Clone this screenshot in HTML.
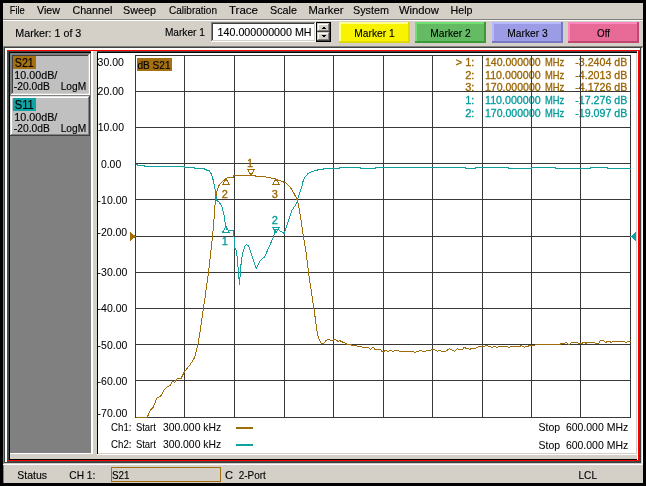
<!DOCTYPE html>
<html><head><meta charset="utf-8"><style>
html,body{margin:0;padding:0;background:#000;width:646px;height:486px;overflow:hidden}
svg{display:block;will-change:transform}
text{font-family:'Liberation Sans',sans-serif}
</style></head><body>
<svg width="646" height="486" viewBox="0 0 646 486" shape-rendering="crispEdges">
<rect x="0" y="0" width="646" height="486" fill="#000"/><rect x="3" y="3" width="640" height="480" fill="#d4d0c8"/><rect x="3" y="19" width="640" height="1" fill="#808080"/><rect x="3" y="20" width="640" height="1" fill="#ffffff"/><text x="9.7" y="14" font-size="11.5" fill="#000" stroke="#000" stroke-width="0.15" text-anchor="start" textLength="15" lengthAdjust="spacingAndGlyphs">File</text><text x="37" y="14" font-size="11.5" fill="#000" stroke="#000" stroke-width="0.15" text-anchor="start" textLength="23" lengthAdjust="spacingAndGlyphs">View</text><text x="72.4" y="14" font-size="11.5" fill="#000" stroke="#000" stroke-width="0.15" text-anchor="start" textLength="40" lengthAdjust="spacingAndGlyphs">Channel</text><text x="123" y="14" font-size="11.5" fill="#000" stroke="#000" stroke-width="0.15" text-anchor="start" textLength="33" lengthAdjust="spacingAndGlyphs">Sweep</text><text x="169" y="14" font-size="11.5" fill="#000" stroke="#000" stroke-width="0.15" text-anchor="start" textLength="48" lengthAdjust="spacingAndGlyphs">Calibration</text><text x="229" y="14" font-size="11.5" fill="#000" stroke="#000" stroke-width="0.15" text-anchor="start" textLength="29" lengthAdjust="spacingAndGlyphs">Trace</text><text x="270" y="14" font-size="11.5" fill="#000" stroke="#000" stroke-width="0.15" text-anchor="start" textLength="27" lengthAdjust="spacingAndGlyphs">Scale</text><text x="308.5" y="14" font-size="11.5" fill="#000" stroke="#000" stroke-width="0.15" text-anchor="start" textLength="35" lengthAdjust="spacingAndGlyphs">Marker</text><text x="353" y="14" font-size="11.5" fill="#000" stroke="#000" stroke-width="0.15" text-anchor="start" textLength="36" lengthAdjust="spacingAndGlyphs">System</text><text x="399" y="14" font-size="11.5" fill="#000" stroke="#000" stroke-width="0.15" text-anchor="start" textLength="40" lengthAdjust="spacingAndGlyphs">Window</text><text x="450.5" y="14" font-size="11.5" fill="#000" stroke="#000" stroke-width="0.15" text-anchor="start" textLength="22" lengthAdjust="spacingAndGlyphs">Help</text><text x="15.3" y="36.6" font-size="11.5" fill="#000" stroke="#000" stroke-width="0.15" text-anchor="start" textLength="66" lengthAdjust="spacingAndGlyphs">Marker: 1 of 3</text><text x="164.9" y="36" font-size="11.5" fill="#000" stroke="#000" stroke-width="0.15" text-anchor="start" textLength="40" lengthAdjust="spacingAndGlyphs">Marker 1</text><rect x="211" y="22" width="105" height="20" fill="#ffffff"/><rect x="211" y="22" width="104" height="19" fill="#808080"/><rect x="212" y="23" width="103" height="18" fill="#d4d0c8"/><rect x="212" y="23" width="102" height="17" fill="#404040"/><rect x="213" y="24" width="101" height="16" fill="#ffffff"/><svg x="213" y="24" width="101" height="16" overflow="hidden"><text x="4.6" y="11.8" font-size="11.5" fill="#000" stroke="#000" stroke-width="0.15" text-anchor="start" textLength="94" lengthAdjust="spacingAndGlyphs">140.000000000 MH</text></svg><rect x="316" y="22" width="15" height="20" fill="#000"/><rect x="317" y="23" width="13" height="9" fill="#404040"/><rect x="317" y="23" width="12" height="8" fill="#d4d0c8"/><rect x="318" y="24" width="11" height="7" fill="#808080"/><rect x="318" y="24" width="10" height="6" fill="#ffffff"/><rect x="319" y="25" width="9" height="5" fill="#d4d0c8"/><rect x="317" y="32" width="13" height="9" fill="#404040"/><rect x="317" y="32" width="12" height="8" fill="#d4d0c8"/><rect x="318" y="33" width="11" height="7" fill="#808080"/><rect x="318" y="33" width="10" height="6" fill="#ffffff"/><rect x="319" y="34" width="9" height="5" fill="#d4d0c8"/><polygon points="321,29 326,29 323.5,26.5" fill="#000"/><polygon points="321,35 326,35 323.5,37.5" fill="#000"/><rect x="339" y="22" width="71" height="21" fill="#e0d800"/><rect x="339" y="22" width="69" height="19" fill="#ffff90"/><rect x="341" y="24" width="67" height="17" fill="#f8f400"/><text x="374.5" y="36.5" font-size="11.5" fill="#000" stroke="#000" stroke-width="0.15" text-anchor="middle" textLength="40.4" lengthAdjust="spacingAndGlyphs">Marker 1</text><rect x="415" y="22" width="71" height="21" fill="#3a9a3a"/><rect x="415" y="22" width="69" height="19" fill="#70e070"/><rect x="417" y="24" width="67" height="17" fill="#64bb64"/><text x="450.5" y="36.5" font-size="11.5" fill="#000" stroke="#000" stroke-width="0.15" text-anchor="middle" textLength="40.4" lengthAdjust="spacingAndGlyphs">Marker 2</text><rect x="492" y="22" width="71" height="21" fill="#7878c0"/><rect x="492" y="22" width="69" height="19" fill="#b8b8ff"/><rect x="494" y="24" width="67" height="17" fill="#9b9be6"/><text x="527.5" y="36.5" font-size="11.5" fill="#000" stroke="#000" stroke-width="0.15" text-anchor="middle" textLength="40.4" lengthAdjust="spacingAndGlyphs">Marker 3</text><rect x="568" y="22" width="71" height="21" fill="#c04870"/><rect x="568" y="22" width="69" height="19" fill="#ff88c0"/><rect x="570" y="24" width="67" height="17" fill="#e86a96"/><text x="603.5" y="36.7" font-size="11.5" fill="#000" stroke="#000" stroke-width="0.15" text-anchor="middle" textLength="12.8" lengthAdjust="spacingAndGlyphs">Off</text><rect x="3" y="46" width="640" height="1" fill="#808080"/><rect x="3" y="46" width="1" height="437" fill="#808080"/><rect x="4" y="47" width="638" height="1" fill="#404040"/><rect x="4" y="47" width="1" height="416" fill="#404040"/><rect x="5" y="48" width="638" height="416" fill="#ffffff"/><rect x="641" y="48" width="1" height="415" fill="#d4d0c8"/><rect x="5" y="463" width="637" height="1" fill="#d4d0c8"/><rect x="7" y="50" width="632" height="411" fill="#ff0000"/><rect x="639" y="50" width="1" height="413" fill="#404848"/><rect x="640" y="48" width="1" height="415" fill="#404040"/><rect x="7" y="461" width="633" height="1" fill="#404848"/><rect x="5" y="462" width="636" height="1" fill="#404040"/><rect x="8" y="51" width="630" height="409" fill="#404848"/><rect x="9" y="52" width="628" height="407" fill="#000000"/><rect x="10" y="53" width="627" height="406" fill="#d4d0c8"/><rect x="637" y="51" width="1" height="409" fill="#ffffff"/><rect x="9" y="459" width="628" height="1" fill="#000000"/><rect x="97" y="454" width="540" height="1" fill="#ffffff"/><rect x="3" y="464" width="640" height="1" fill="#ffffff"/><rect x="10" y="53" width="81" height="400" fill="#808080"/><rect x="93" y="51" width="4" height="403" fill="#d4d0c8"/><rect x="91" y="51" width="2" height="403" fill="#ffffff"/><rect x="10" y="453" width="83" height="1" fill="#ffffff"/><rect x="11" y="54" width="79" height="41" fill="#ffffff"/><rect x="11" y="54" width="78" height="40" fill="#808080"/><rect x="12" y="55" width="77" height="39" fill="#d4d0c8"/><rect x="12" y="55" width="76" height="38" fill="#404040"/><rect x="13" y="56" width="75" height="37" fill="#c0c0c0"/><rect x="10" y="96" width="80" height="40" fill="#404040"/><rect x="10" y="96" width="79" height="39" fill="#e0e0e0"/><rect x="11" y="97" width="78" height="38" fill="#808080"/><rect x="11" y="97" width="77" height="37" fill="#ffffff"/><rect x="12" y="98" width="76" height="36" fill="#c0c0c0"/><rect x="13" y="56" width="23" height="13" fill="#a47010"/><text x="14.8" y="66.7" font-size="12" fill="#000" stroke="#000" stroke-width="0.15" text-anchor="start" textLength="19" lengthAdjust="spacingAndGlyphs">S21</text><text x="14.3" y="78.8" font-size="11" fill="#000" stroke="#000" stroke-width="0.15" text-anchor="start" textLength="43" lengthAdjust="spacingAndGlyphs">10.00dB/</text><text x="13.8" y="89.6" font-size="11" fill="#000" stroke="#000" stroke-width="0.15" text-anchor="start" textLength="36" lengthAdjust="spacingAndGlyphs">-20.0dB</text><text x="86.2" y="89.6" font-size="11" fill="#000" stroke="#000" stroke-width="0.15" text-anchor="end" textLength="25.5" lengthAdjust="spacingAndGlyphs">LogM</text><rect x="13" y="98" width="23" height="13" fill="#12a2a2"/><text x="14.8" y="109" font-size="12" fill="#000" stroke="#000" stroke-width="0.15" text-anchor="start" textLength="19" lengthAdjust="spacingAndGlyphs">S11</text><text x="14.3" y="120.8" font-size="11" fill="#000" stroke="#000" stroke-width="0.15" text-anchor="start" textLength="43" lengthAdjust="spacingAndGlyphs">10.00dB/</text><text x="13.8" y="131.9" font-size="11" fill="#000" stroke="#000" stroke-width="0.15" text-anchor="start" textLength="36" lengthAdjust="spacingAndGlyphs">-20.0dB</text><text x="86.2" y="131.9" font-size="11" fill="#000" stroke="#000" stroke-width="0.15" text-anchor="end" textLength="25.5" lengthAdjust="spacingAndGlyphs">LogM</text><rect x="97" y="52" width="1" height="402" fill="#000"/><rect x="98" y="53" width="538" height="400" fill="#ffffff"/><rect x="636" y="53" width="1" height="400" fill="#d4d0c8"/><text x="474.4" y="66" font-size="11" fill="#9a6400" stroke="#9a6400" stroke-width="0.3" text-anchor="end">&gt; 1:</text><text x="485" y="66" font-size="11" fill="#9a6400" stroke="#9a6400" stroke-width="0.3" text-anchor="start" textLength="55.6" lengthAdjust="spacingAndGlyphs">140.000000</text><text x="545" y="66" font-size="11" fill="#9a6400" stroke="#9a6400" stroke-width="0.3" text-anchor="start" textLength="19.3" lengthAdjust="spacingAndGlyphs">MHz</text><text x="627.3" y="66" font-size="11" fill="#9a6400" stroke="#9a6400" stroke-width="0.3" text-anchor="end" textLength="52" lengthAdjust="spacingAndGlyphs">-3.2404 dB</text><text x="474.4" y="78.6" font-size="11" fill="#9a6400" stroke="#9a6400" stroke-width="0.3" text-anchor="end">2:</text><text x="485" y="78.6" font-size="11" fill="#9a6400" stroke="#9a6400" stroke-width="0.3" text-anchor="start" textLength="55.6" lengthAdjust="spacingAndGlyphs">110.000000</text><text x="545" y="78.6" font-size="11" fill="#9a6400" stroke="#9a6400" stroke-width="0.3" text-anchor="start" textLength="19.3" lengthAdjust="spacingAndGlyphs">MHz</text><text x="627.3" y="78.6" font-size="11" fill="#9a6400" stroke="#9a6400" stroke-width="0.3" text-anchor="end" textLength="52" lengthAdjust="spacingAndGlyphs">-4.2013 dB</text><text x="474.4" y="91.4" font-size="11" fill="#9a6400" stroke="#9a6400" stroke-width="0.3" text-anchor="end">3:</text><text x="485" y="91.4" font-size="11" fill="#9a6400" stroke="#9a6400" stroke-width="0.3" text-anchor="start" textLength="55.6" lengthAdjust="spacingAndGlyphs">170.000000</text><text x="545" y="91.4" font-size="11" fill="#9a6400" stroke="#9a6400" stroke-width="0.3" text-anchor="start" textLength="19.3" lengthAdjust="spacingAndGlyphs">MHz</text><text x="627.3" y="91.4" font-size="11" fill="#9a6400" stroke="#9a6400" stroke-width="0.3" text-anchor="end" textLength="52" lengthAdjust="spacingAndGlyphs">-4.1726 dB</text><text x="474.4" y="104.3" font-size="11" fill="#009a9a" stroke="#009a9a" stroke-width="0.3" text-anchor="end">1:</text><text x="485" y="104.3" font-size="11" fill="#009a9a" stroke="#009a9a" stroke-width="0.3" text-anchor="start" textLength="55.6" lengthAdjust="spacingAndGlyphs">110.000000</text><text x="545" y="104.3" font-size="11" fill="#009a9a" stroke="#009a9a" stroke-width="0.3" text-anchor="start" textLength="19.3" lengthAdjust="spacingAndGlyphs">MHz</text><text x="627.3" y="104.3" font-size="11" fill="#009a9a" stroke="#009a9a" stroke-width="0.3" text-anchor="end" textLength="52" lengthAdjust="spacingAndGlyphs">-17.276 dB</text><text x="474.4" y="117" font-size="11" fill="#009a9a" stroke="#009a9a" stroke-width="0.3" text-anchor="end">2:</text><text x="485" y="117" font-size="11" fill="#009a9a" stroke="#009a9a" stroke-width="0.3" text-anchor="start" textLength="55.6" lengthAdjust="spacingAndGlyphs">170.000000</text><text x="545" y="117" font-size="11" fill="#009a9a" stroke="#009a9a" stroke-width="0.3" text-anchor="start" textLength="19.3" lengthAdjust="spacingAndGlyphs">MHz</text><text x="627.3" y="117" font-size="11" fill="#009a9a" stroke="#009a9a" stroke-width="0.3" text-anchor="end" textLength="52" lengthAdjust="spacingAndGlyphs">-19.097 dB</text><rect x="135" y="55" width="1" height="363" fill="#383838"/><rect x="184" y="55" width="1" height="363" fill="#383838"/><rect x="234" y="55" width="1" height="363" fill="#383838"/><rect x="284" y="55" width="1" height="363" fill="#383838"/><rect x="333" y="55" width="1" height="363" fill="#383838"/><rect x="383" y="55" width="1" height="363" fill="#383838"/><rect x="432" y="55" width="1" height="363" fill="#383838"/><rect x="482" y="55" width="1" height="363" fill="#383838"/><rect x="531" y="55" width="1" height="363" fill="#383838"/><rect x="580" y="55" width="1" height="363" fill="#383838"/><rect x="630" y="55" width="1" height="363" fill="#383838"/><rect x="135" y="55" width="496" height="1" fill="#383838"/><rect x="135" y="91" width="496" height="1" fill="#383838"/><rect x="135" y="127" width="496" height="1" fill="#383838"/><rect x="135" y="163" width="496" height="1" fill="#383838"/><rect x="135" y="199" width="496" height="1" fill="#383838"/><rect x="135" y="236" width="496" height="1" fill="#383838"/><rect x="135" y="272" width="496" height="1" fill="#383838"/><rect x="135" y="308" width="496" height="1" fill="#383838"/><rect x="135" y="344" width="496" height="1" fill="#383838"/><rect x="135" y="380" width="496" height="1" fill="#383838"/><rect x="135" y="417" width="496" height="1" fill="#383838"/><text x="97.6" y="65.6" font-size="11" fill="#000" stroke="#000" stroke-width="0.05" text-anchor="start" textLength="26.2" lengthAdjust="spacingAndGlyphs">30.00</text><text x="97.6" y="94.5" font-size="11" fill="#000" stroke="#000" stroke-width="0.05" text-anchor="start" textLength="26.2" lengthAdjust="spacingAndGlyphs">20.00</text><text x="97.8" y="131" font-size="11" fill="#000" stroke="#000" stroke-width="0.05" text-anchor="start" textLength="26.2" lengthAdjust="spacingAndGlyphs">10.00</text><text x="100.9" y="167.9" font-size="11" fill="#000" stroke="#000" stroke-width="0.05" text-anchor="start" textLength="20.3" lengthAdjust="spacingAndGlyphs">0.00</text><text x="97.6" y="203.7" font-size="11" fill="#000" stroke="#000" stroke-width="0.05" text-anchor="start" textLength="29.7" lengthAdjust="spacingAndGlyphs">-10.00</text><text x="97.4" y="236.1" font-size="11" fill="#000" stroke="#000" stroke-width="0.05" text-anchor="start" textLength="29.7" lengthAdjust="spacingAndGlyphs">-20.00</text><text x="97.6" y="275.7" font-size="11" fill="#000" stroke="#000" stroke-width="0.05" text-anchor="start" textLength="29.7" lengthAdjust="spacingAndGlyphs">-30.00</text><text x="97.6" y="311.8" font-size="11" fill="#000" stroke="#000" stroke-width="0.05" text-anchor="start" textLength="29.7" lengthAdjust="spacingAndGlyphs">-40.00</text><text x="97.6" y="348.9" font-size="11" fill="#000" stroke="#000" stroke-width="0.05" text-anchor="start" textLength="29.7" lengthAdjust="spacingAndGlyphs">-50.00</text><text x="97.6" y="385.2" font-size="11" fill="#000" stroke="#000" stroke-width="0.05" text-anchor="start" textLength="29.7" lengthAdjust="spacingAndGlyphs">-60.00</text><text x="97.6" y="416.7" font-size="11" fill="#000" stroke="#000" stroke-width="0.05" text-anchor="start" textLength="29.7" lengthAdjust="spacingAndGlyphs">-70.00</text><rect x="137" y="58" width="35" height="13" fill="#a47010"/><text x="137.5" y="68.5" font-size="11.5" fill="#000" stroke="#000" stroke-width="0.15" text-anchor="start" textLength="33" lengthAdjust="spacingAndGlyphs">dB S21</text><polyline points="135.5,417.5 147.2,417.5 150.3,410.1 153.4,407.0 157.0,397.8 160.6,396.2 164.7,389.0 167.3,387.0 170.3,385.4 172.4,381.1 175.0,382.3 177.0,378.7 181.2,378.2 184.5,371.6 190.5,364.2 194.7,357.3 197.9,344.4 200.4,329.6 203.3,309.0 204.7,300.0 206.8,284.0 208.6,272.0 210.6,254.0 212.5,236.0 213.6,224.8 214.4,213.2 215.4,200.3 216.8,191.6 218.7,185.9 222.3,181.5 226.3,178.3 228.2,177.5 233.0,177.5 234.0,175.5 255.5,175.5 256.0,176.5 265.7,176.5 266.3,177.5 270.7,177.5 271.3,178.5 275.7,178.5 276.3,179.5 277.5,179.5 278.0,180.5 280.8,180.5 281.3,181.5 283.0,181.5 283.5,182.5 285.2,182.5 286.6,183.5 291.5,188.9 296.4,198.0 298.1,202.9 301.4,222.6 303.8,239.0 306.0,252.3 308.5,272.1 311.0,289.4 314.0,309.1 316.7,328.9 318.0,336.0 319.2,339.6 320.5,342.0 321.5,343.5 323.5,343.5 324.8,342.0 326.0,340.5 327.5,339.5 329.5,339.5 330.5,340.5 333.0,340.5 334.0,339.5 335.5,339.5 336.6,340.5 338.4,341.5 339.7,340.5 341.5,341.5 343.4,342.5 345.9,343.5 347.0,344.5 351.5,344.5 352.0,345.5 356.5,345.5 357.2,346.5 361.6,346.5 362.2,347.5 368.7,347.5 370.2,349.5 371.5,348.5 373.3,347.5 375.2,349.5 380.8,349.5 382.0,351.5 383.2,351.5 385.7,350.5 387.6,351.5 390.0,350.5 393.2,351.5 395.6,350.5 398.6,350.5 399.6,351.5 413.2,351.5 415.0,352.5 417.0,351.5 418.8,351.5 419.4,350.5 421.6,350.5 422.5,351.5 425.6,351.5 426.2,350.5 430.5,350.5 431.8,349.5 434.5,349.5 435.7,350.5 437.6,351.5 438.8,350.5 440.4,350.5 441.3,351.5 445.6,351.5 446.9,350.5 449.3,348.5 451.2,349.5 453.0,350.5 454.6,351.5 457.4,348.5 459.2,349.5 462.3,349.5 464.2,347.5 466.7,348.5 468.5,348.5 469.8,349.5 471.2,348.5 475.6,348.5 476.8,347.5 478.7,346.5 484.6,346.5 485.5,345.5 487.6,345.5 488.6,346.5 490.4,346.5 492.0,347.5 493.5,346.5 495.4,346.5 497.0,347.5 498.5,346.5 507.5,346.5 508.4,347.5 509.5,347.5 510.5,346.5 519.8,346.5 521.0,345.5 522.9,346.5 524.4,347.5 526.0,346.5 527.8,346.5 529.0,345.5 534.6,345.5 535.2,344.5 560.0,344.5 560.2,343.5 564.6,343.5 565.8,342.5 567.7,343.5 568.6,344.5 570.8,343.5 571.4,342.5 577.6,342.5 578.8,343.5 582.5,343.5 583.0,342.5 585.0,342.5 585.6,343.5 587.2,342.5 594.5,342.5 595.3,343.5 598.9,343.5 600.1,340.5 603.3,340.5 605.7,342.5 607.3,341.5 609.8,341.5 611.4,342.5 613.0,341.5 624.3,341.5 625.9,342.5 627.9,341.5 630.5,341.5" fill="none" stroke="#a06c08" stroke-width="1" shape-rendering="crispEdges"/><polyline points="135.5,164.5 137.0,164.5 137.0,165.5 144.0,165.5 144.0,166.5 184.0,166.5 184.0,167.5 194.0,167.5 194.0,168.5 204.0,168.5 204.0,169.5 206.0,169.5 206.0,170.5 209.0,170.5 210.5,172.5 211.5,174.5 213.6,181.5 215.4,191.6 216.5,200.3 218.7,201.7 221.6,206.0 223.7,213.2 225.2,223.3 226.6,229.0 228.7,230.3 232.7,230.3 233.3,231.0 233.5,236.0 234.2,237.0 234.6,248.0 235.7,248.0 237.3,257.9 239.5,285.0 240.6,267.7 242.3,254.6 244.8,246.3 246.4,244.4 248.9,246.3 252.2,256.2 256.3,268.6 260.4,260.3 264.5,257.0 269.4,246.3 273.6,236.5 275.5,229.5 277.7,229.0 281.0,231.5 284.2,233.5 287.4,224.3 291.5,211.1 296.4,203.7 298.1,198.0 301.4,188.1 303.1,181.2 304.6,177.7 307.4,174.3 308.5,173.1 311.6,171.9 315.5,170.4 320.1,169.5 327.0,168.5 339.0,168.5 339.0,167.5 360.0,167.5 360.0,168.5 375.0,168.5 375.0,167.5 465.0,167.5 465.0,168.5 475.0,168.5 475.0,167.5 508.0,167.5 508.0,168.5 531.0,168.5 531.0,167.5 555.0,167.5 555.0,168.5 590.0,168.5 590.0,167.5 607.0,167.5 607.0,168.5 630.5,168.5" fill="none" stroke="#10a0a0" stroke-width="1" shape-rendering="crispEdges"/><path d="M247.5,169.5 L254.5,169.5 L251.0,175 Z" fill="none" stroke="#a06c08" stroke-width="1" shape-rendering="crispEdges"/><text x="250" y="167" font-size="11" fill="#9a6400" stroke="#9a6400" stroke-width="0.3" text-anchor="middle">1</text><path d="M222.5,184.5 L229.5,184.5 L226.0,179 Z" fill="none" stroke="#a06c08" stroke-width="1" shape-rendering="crispEdges"/><text x="224.8" y="197.8" font-size="11" fill="#9a6400" stroke="#9a6400" stroke-width="0.3" text-anchor="middle">2</text><path d="M272.5,184.5 L279.5,184.5 L276.0,179 Z" fill="none" stroke="#a06c08" stroke-width="1" shape-rendering="crispEdges"/><text x="274.8" y="197.6" font-size="11" fill="#9a6400" stroke="#9a6400" stroke-width="0.3" text-anchor="middle">3</text><path d="M222.5,232.5 L229.5,232.5 L226.0,226.5 Z" fill="none" stroke="#10a0a0" stroke-width="1" shape-rendering="crispEdges"/><text x="224.8" y="244.8" font-size="11" fill="#009a9a" stroke="#009a9a" stroke-width="0.3" text-anchor="middle">1</text><path d="M272.5,227.5 L279.5,227.5 L276.0,232.5 Z" fill="none" stroke="#10a0a0" stroke-width="1" shape-rendering="crispEdges"/><text x="274.8" y="224" font-size="11" fill="#009a9a" stroke="#009a9a" stroke-width="0.3" text-anchor="middle">2</text><polygon points="130,232 136,236.5 130,241" fill="#a06c08"/><polygon points="636,232 630.5,236.5 636,241" fill="#10a0a0"/><text x="111" y="430.9" font-size="11" fill="#000" stroke="#000" stroke-width="0.05" text-anchor="start" textLength="20.5" lengthAdjust="spacingAndGlyphs">Ch1:</text><text x="135.9" y="430.9" font-size="11" fill="#000" stroke="#000" stroke-width="0.05" text-anchor="start" textLength="20" lengthAdjust="spacingAndGlyphs">Start</text><text x="162.9" y="430.9" font-size="11" fill="#000" stroke="#000" stroke-width="0.05" text-anchor="start" textLength="58.3" lengthAdjust="spacingAndGlyphs">300.000 kHz</text><rect x="236" y="427" width="17" height="1" fill="#a06c08"/><rect x="236" y="428" width="17" height="1" fill="#a06c08"/><text x="111" y="448.2" font-size="11" fill="#000" stroke="#000" stroke-width="0.05" text-anchor="start" textLength="20.5" lengthAdjust="spacingAndGlyphs">Ch2:</text><text x="135.9" y="448.2" font-size="11" fill="#000" stroke="#000" stroke-width="0.05" text-anchor="start" textLength="20" lengthAdjust="spacingAndGlyphs">Start</text><text x="162.9" y="448.2" font-size="11" fill="#000" stroke="#000" stroke-width="0.05" text-anchor="start" textLength="58.3" lengthAdjust="spacingAndGlyphs">300.000 kHz</text><rect x="236" y="444" width="17" height="1" fill="#10a0a0"/><rect x="236" y="445" width="17" height="1" fill="#10a0a0"/><text x="628.2" y="431" font-size="11" fill="#000" stroke="#000" stroke-width="0.05" text-anchor="end" textLength="89.7" lengthAdjust="spacingAndGlyphs" xml:space="preserve">Stop  600.000 MHz</text><text x="628.2" y="448.5" font-size="11" fill="#000" stroke="#000" stroke-width="0.05" text-anchor="end" textLength="89.7" lengthAdjust="spacingAndGlyphs" xml:space="preserve">Stop  600.000 MHz</text><text x="17.3" y="478.5" font-size="11.5" fill="#000" stroke="#000" stroke-width="0.15" text-anchor="start" textLength="29.7" lengthAdjust="spacingAndGlyphs">Status</text><text x="69.3" y="478.5" font-size="11.5" fill="#000" stroke="#000" stroke-width="0.15" text-anchor="start" textLength="26" lengthAdjust="spacingAndGlyphs">CH 1:</text><rect x="111" y="467" width="110" height="15" fill="#a2700f"/><rect x="112" y="468" width="108" height="13" fill="#d4d0c8"/><text x="112" y="478.5" font-size="11.5" fill="#000" stroke="#000" stroke-width="0.15" text-anchor="start" textLength="17.5" lengthAdjust="spacingAndGlyphs">S21</text><text x="225" y="478.5" font-size="11.5" fill="#000" stroke="#000" stroke-width="0.15" text-anchor="start" textLength="8" lengthAdjust="spacingAndGlyphs">C</text><text x="238.8" y="478.5" font-size="11.5" fill="#000" stroke="#000" stroke-width="0.15" text-anchor="start" textLength="27" lengthAdjust="spacingAndGlyphs">2-Port</text><text x="578.5" y="479.4" font-size="11.5" fill="#000" stroke="#000" stroke-width="0.15" text-anchor="start" textLength="18.5" lengthAdjust="spacingAndGlyphs">LCL</text>
</svg>
</body></html>
